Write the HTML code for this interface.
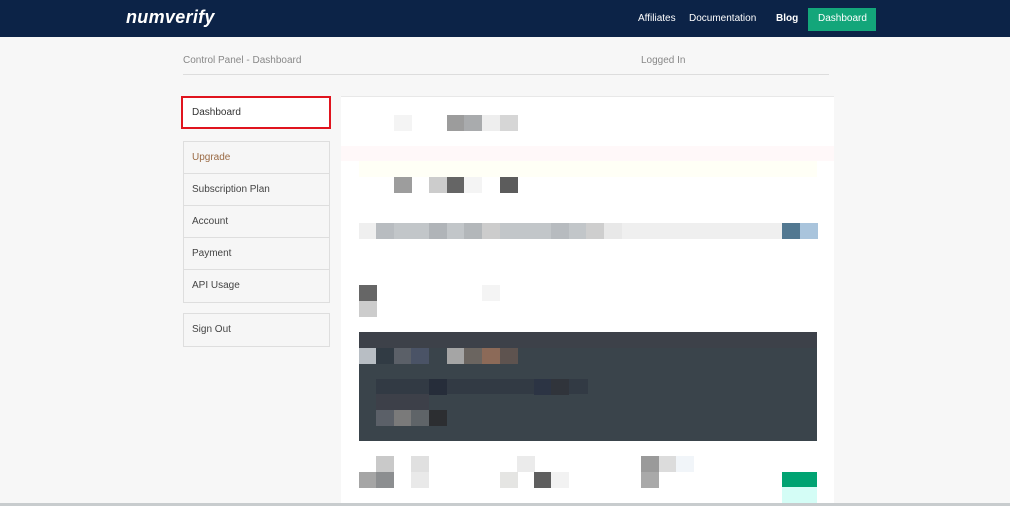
<!DOCTYPE html>
<html><head><meta charset="utf-8"><style>
*{margin:0;padding:0;box-sizing:border-box}
body{width:1010px;height:506px;overflow:hidden;background:#f7f7f7;font-family:"Liberation Sans",sans-serif;position:relative}
.nav{position:absolute;left:0;top:0;width:1010px;height:37px;background:#0c2347}
.a{position:absolute}
.t{position:absolute;font-size:10px;color:#fff;white-space:nowrap}
.side{position:absolute;left:183px;width:147px;background:#f6f6f6;border:1px solid #dedede}
.item{height:32px;line-height:31px;padding-left:8px;font-size:10px;color:#444;border-bottom:1px solid #dedede}
.item:last-child{border-bottom:none}
.b{position:absolute;width:18px;height:16px}
</style></head><body>
<div class="nav"></div>
<div class="t" style="left:126px;top:7px;font-size:18px;font-weight:bold;font-style:italic;letter-spacing:0.3px">numverify</div>
<div class="t" style="left:638px;top:13px">Affiliates</div>
<div class="t" style="left:689px;top:13px">Documentation</div>
<div class="t" style="left:776px;top:13px;font-weight:bold">Blog</div>
<div class="a" style="left:808px;top:8px;width:68px;height:23px;background:#13a67a"></div>
<div class="t" style="left:818px;top:13px">Dashboard</div>

<div class="a" style="left:183px;top:55px;font-size:10px;color:#888">Control Panel - Dashboard</div>
<div class="a" style="left:641px;top:55px;font-size:10px;color:#888">Logged In</div>
<div class="a" style="left:183px;top:74px;width:646px;height:1px;background:#ddd"></div>

<div class="a" style="left:181px;top:96px;width:150px;height:33px;border:2px solid #e0141e;background:#fff;font-size:10px;color:#333;line-height:30px;padding-left:9px">Dashboard</div>
<div class="side" style="top:141px">
<div class="item" style="color:#9a6a44">Upgrade</div>
<div class="item">Subscription Plan</div>
<div class="item">Account</div>
<div class="item">Payment</div>
<div class="item">API Usage</div>
</div>
<div class="side" style="top:313px"><div class="item">Sign Out</div></div>

<div class="a" style="left:341px;top:96px;width:493px;height:410px;background:#fff;border-top:1px solid #e8e8e8"></div>
<div class="a" style="left:341px;top:146px;width:493px;height:15px;background:#fff8f9"></div>
<div class="a" style="left:359px;top:161px;width:458px;height:16px;background:#fffff6"></div>

<div class="b" style="left:394px;top:115px;background:#f4f4f4"></div>
<div class="b" style="left:447px;top:115px;background:#9c9c9c"></div>
<div class="b" style="left:464px;top:115px;background:#a9abad"></div>
<div class="b" style="left:482px;top:115px;background:#eee"></div>
<div class="b" style="left:500px;top:115px;background:#d6d6d6"></div>
<div class="b" style="left:394px;top:177px;background:#9d9d9d"></div>
<div class="b" style="left:429px;top:177px;background:#ccc"></div>
<div class="b" style="left:447px;top:177px;background:#656565"></div>
<div class="b" style="left:464px;top:177px;background:#f4f4f4"></div>
<div class="b" style="left:500px;top:177px;background:#5c5c5c"></div>
<div class="a" style="left:359px;top:223px;width:458px;height:16px;background:#efefef"></div>
<div class="a" style="left:376px;top:223px;width:245px;height:16px;background:#c2c6c9"></div>
<div class="b" style="left:376px;top:223px;background:#b8bcc0"></div>
<div class="b" style="left:429px;top:223px;background:#b0b4b8"></div>
<div class="b" style="left:464px;top:223px;background:#b3b7ba"></div>
<div class="b" style="left:482px;top:223px;background:#ccc"></div>
<div class="b" style="left:551px;top:223px;background:#b7bbbf"></div>
<div class="b" style="left:586px;top:223px;background:#cecece"></div>
<div class="b" style="left:604px;top:223px;background:#e8e8e8"></div>
<div class="b" style="left:782px;top:223px;background:#527891"></div>
<div class="b" style="left:800px;top:223px;background:#a9c4dc"></div>
<div class="b" style="left:359px;top:285px;background:#666"></div>
<div class="b" style="left:482px;top:285px;background:#f4f4f4"></div>
<div class="b" style="left:359px;top:301px;background:#ccc"></div>
<div class="a" style="left:359px;top:332px;width:458px;height:109px;background:#3a444b"></div>
<div class="a" style="left:359px;top:332px;width:458px;height:16px;background:#3d4149"></div>
<div class="b" style="left:359px;top:348px;background:#b8bec4"></div>
<div class="b" style="left:376px;top:348px;background:#313b44"></div>
<div class="b" style="left:394px;top:348px;background:#5b6068"></div>
<div class="b" style="left:411px;top:348px;background:#4a5366"></div>
<div class="b" style="left:447px;top:348px;background:#a5a5a5"></div>
<div class="b" style="left:464px;top:348px;background:#6b6560"></div>
<div class="b" style="left:482px;top:348px;background:#8c6a58"></div>
<div class="b" style="left:500px;top:348px;background:#5e534f"></div>
<div class="a" style="left:376px;top:379px;width:212px;height:15px;background:#323a44"></div>
<div class="b" style="left:429px;top:379px;background:#262d3a"></div>
<div class="b" style="left:534px;top:379px;background:#2c3444"></div>
<div class="b" style="left:551px;top:379px;background:#30343b"></div>
<div class="a" style="left:376px;top:394px;width:53px;height:16px;background:#3d4049"></div>
<div class="b" style="left:376px;top:410px;background:#5b6068"></div>
<div class="b" style="left:394px;top:410px;background:#7a7a7a"></div>
<div class="b" style="left:411px;top:410px;background:#5f6468"></div>
<div class="b" style="left:429px;top:410px;background:#2c2e31"></div>
<div class="b" style="left:376px;top:456px;background:#c9c9c9"></div>
<div class="b" style="left:411px;top:456px;background:#e0e0e0"></div>
<div class="b" style="left:517px;top:456px;background:#ebebeb"></div>
<div class="b" style="left:641px;top:456px;background:#9a9a9a"></div>
<div class="b" style="left:659px;top:456px;background:#dcdcdc"></div>
<div class="b" style="left:676px;top:456px;background:#f1f5f9"></div>
<div class="b" style="left:359px;top:472px;background:#a5a5a5"></div>
<div class="b" style="left:376px;top:472px;background:#8c8e90"></div>
<div class="b" style="left:411px;top:472px;background:#e9e9e9"></div>
<div class="b" style="left:500px;top:472px;background:#e5e5e3"></div>
<div class="b" style="left:534px;top:472px;background:#5f5f5f"></div>
<div class="b" style="left:551px;top:472px;background:#f2f2f2"></div>
<div class="b" style="left:641px;top:472px;background:#a9a9a9"></div>
<div class="a" style="left:782px;top:472px;width:35px;height:15px;background:#00a372"></div>
<div class="a" style="left:782px;top:487px;width:35px;height:16px;background:#d4fdf6"></div>
<div class="a" style="left:0;top:503px;width:1010px;height:3px;background:#c8ccce"></div>
</body></html>
